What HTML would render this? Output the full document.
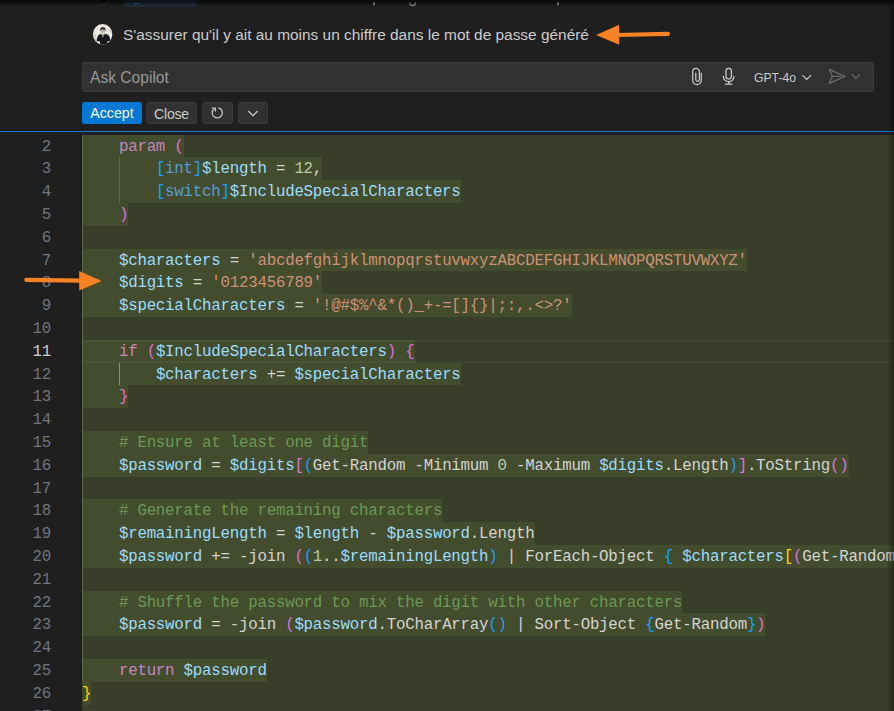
<!DOCTYPE html>
<html><head><meta charset="utf-8">
<style>
html,body{margin:0;padding:0;background:#1f1f1f;}
html{overflow:hidden;width:894px;height:711px;}
body{width:894px;height:711px;overflow:hidden;position:relative;font-family:"Liberation Sans",sans-serif;}
.abs{position:absolute;}
#green{position:absolute;left:82px;top:135px;width:812px;height:576px;background:#393e2b;}
.ln{position:absolute;left:0;width:50.9px;text-align:right;height:22.8px;line-height:22.8px;font-family:"Liberation Mono",monospace;font-size:15.8px;letter-spacing:-0.246px;color:#6e7681;white-space:pre;}
.ln.cur{color:#cccccc;}
.cl{position:absolute;left:82px;height:22.8px;line-height:22.8px;font-family:"Liberation Mono",monospace;font-size:15.8px;letter-spacing:-0.246px;white-space:pre;color:#d4d4d4;}
.hl{position:absolute;left:82px;height:22.8px;background:#434c2c;}
.btn2{top:102px;height:22px;background:#313131;border:1px solid #3b3b3b;border-radius:3px;box-sizing:border-box}
.guide{position:absolute;width:1px;background:#4b4f40;}
</style></head><body>
<!-- top cut-off strip -->
<div class="abs" style="left:97px;top:-14px;width:12px;height:19px;border-radius:50%;background:#0c0c0c;border:1px solid #3a3a3a;box-sizing:border-box"></div>
<div class="abs" style="left:124px;top:-10px;width:73px;height:16.5px;border-radius:4px;background:#232e3a"></div>
<div class="abs" style="left:134px;top:2.5px;width:6px;height:1.5px;background:#2a70b8"></div>
<div class="abs" style="left:373px;top:2px;width:1.5px;height:3px;background:#9a9a9a"></div>
<div class="abs" style="left:409px;top:2px;width:7px;height:3.5px;border-radius:0 0 4px 4px;border:1.3px solid #a8a8a8;border-top:none;box-sizing:border-box"></div>
<div class="abs" style="left:557px;top:2px;width:1.5px;height:3px;background:#9a9a9a"></div>
<div class="abs" style="left:0;top:0;width:894px;height:8px;background:linear-gradient(to bottom,rgba(0,0,0,0.62) 0,rgba(0,0,0,0.55) 2.5px,rgba(0,0,0,0.18) 4.5px,rgba(0,0,0,0) 7px)"></div>

<!-- avatar -->
<svg class="abs" style="left:87px;top:20px" width="30" height="30" viewBox="87 20 30 30">
  <defs>
    <clipPath id="avc"><ellipse cx="102.6" cy="34.2" rx="9.7" ry="10.3"/></clipPath>
    <filter id="avb" x="-20%" y="-20%" width="140%" height="140%"><feGaussianBlur stdDeviation="0.55"/></filter>
  </defs>
  <g filter="url(#avb)">
    <ellipse cx="102.6" cy="34.2" rx="9.7" ry="10.3" fill="#e9eae6"/>
    <g clip-path="url(#avc)">
      <circle cx="95" cy="36" r="1.6" fill="#c9d2bd"/>
      <circle cx="110.5" cy="30.5" r="1.5" fill="#d4d8c8"/>
      <circle cx="96.5" cy="41" r="2" fill="#b9c3a8"/>
      <circle cx="109.5" cy="41.5" r="1.6" fill="#cfc6c0"/>
      <path d="M96.8 41.5 Q96.6 34.4 101.6 34 L105.4 34 Q110.4 34.4 110.3 41.5 L107.6 41.2 L107.2 45 L100.3 45 L99.8 41.2 Z" fill="#15161f"/>
      <ellipse cx="98" cy="42.3" rx="1.5" ry="1" fill="#d9cfc6"/>
      <ellipse cx="109" cy="42.3" rx="1.5" ry="1" fill="#d9cfc6"/>
      <ellipse cx="102.9" cy="31.7" rx="2.45" ry="3.3" fill="#dcc7ba"/>
      <path d="M100.0 31 Q99.9 27 102.9 26.9 Q105.9 27 105.8 31 Q105 29.5 102.9 29.4 Q100.8 29.5 100.0 31 Z" fill="#3a332f"/>
      <path d="M101.1 31.3 H104.7" stroke="#a89488" stroke-width="0.7"/>
      <path d="M101.6 35.4 L102.9 37.6 L104.2 35.4 Z" fill="#c9b3a6"/>
    </g>
  </g>
</svg>
<div class="abs" id="msg" style="left:123px;top:24px;height:22px;line-height:22px;font-size:15.43px;color:#cccccc;white-space:pre;">S'assurer qu'il y ait au moins un chiffre dans le mot de passe généré</div>

<!-- input -->
<div class="abs" style="left:82px;top:62px;width:790px;height:28px;background:#313131;border:1px solid #3c3c3c;border-radius:2.5px"></div>
<div class="abs" id="ask" style="left:90px;top:67px;height:22px;line-height:22px;font-size:15.6px;color:#989898;white-space:pre;">Ask Copilot</div>

<!-- buttons -->
<div class="abs" style="left:82px;top:102px;width:60px;height:22px;background:#0078d4;border-radius:2.5px"></div>
<div class="abs" id="accept" style="left:82px;top:101.8px;width:60px;height:22px;line-height:22px;text-align:center;font-size:14.2px;color:#ffffff;">Accept</div>
<div class="abs btn2" style="left:146px;width:51px"></div>
<div class="abs" id="close" style="left:146px;top:102.5px;width:51px;height:22px;line-height:22px;text-align:center;font-size:14px;letter-spacing:-0.2px;color:#cccccc;">Close</div>
<div class="abs btn2" style="left:202px;width:31px"></div>
<div class="abs btn2" style="left:238px;width:30px"></div>
<svg class="abs" style="left:195px;top:95px" width="80" height="35" viewBox="195 95 80 35" fill="none" stroke="#cccccc" stroke-width="1.25">
  <!-- refresh -->
  <path d="M218.5 107.85 A5.1 5.1 0 1 1 214.0 108.9" />
  <path d="M211.9 108 H215.4 V111.4" stroke-linejoin="miter"/>
  <!-- chevron -->
  <path d="M248.3 111 L253 115.7 L257.7 111"/>
</svg>

<!-- input icons -->
<svg class="abs" style="left:680px;top:60px" width="200" height="35" viewBox="680 60 200 35" fill="none" stroke="#cccccc" stroke-width="1.25" stroke-linecap="round" stroke-linejoin="round">
  <!-- paperclip -->
  <path d="M701.3 73.2 V80.2 A4.3 4.3 0 0 1 692.7 80.2 V71.7 A3.35 3.35 0 0 1 699.4 71.7 V79.6 A1.8 1.8 0 0 1 695.8 79.6 V73.2"/>
  <!-- mic -->
  <rect x="726" y="68.4" width="5.4" height="10.6" rx="2.7"/>
  <path d="M723.3 76.3 A5.35 5.35 0 0 0 734 76.3"/>
  <path d="M728.65 81.8 V84.1 M725.4 84.2 H731.9"/>
  <!-- chevron -->
  <path d="M802.4 75.2 L806.7 79.5 L811 75.2" stroke-width="1.1" stroke-linecap="butt" stroke-linejoin="miter"/>
  <!-- send (disabled) -->
  <g stroke="#6c6c6c" stroke-width="1.2">
    <path d="M829.2 69.4 L844.9 76.4 L829.2 83.4 L832.3 76.4 Z"/>
    <path d="M832.3 76.4 H840.5"/>
    <path d="M851.8 74.4 L855.9 78.5 L860 74.4" stroke-linecap="butt" stroke-linejoin="miter"/>
  </g>
</svg>
<div class="abs" id="gpt" style="left:754px;top:66.7px;height:22px;line-height:22px;font-size:12.2px;color:#cccccc;white-space:pre;">GPT-4o</div>

<!-- blue line -->

<div id="green"></div>
<div class="ln" style="top:135.60px">2</div>
<div class="hl" style="top:135.00px;width:101.60px;height:22.40px"></div>
<div class="cl" style="top:135.60px">    <span style="color:#C586C0">param</span><span style="color:#D4D4D4"> </span><span style="color:#DA70D6">(</span></div>
<div class="ln" style="top:158.40px">3</div>
<div class="hl" style="top:157.40px;width:240.14px;height:22.80px"></div>
<div class="cl" style="top:158.40px">        <span style="color:#179FFF">[</span><span style="color:#569CD6">int</span><span style="color:#179FFF">]</span><span style="color:#9CDCFE">$length</span><span style="color:#D4D4D4"> = </span><span style="color:#B5CEA8">12</span><span style="color:#D4D4D4">,</span></div>
<div class="ln" style="top:181.20px">4</div>
<div class="hl" style="top:180.20px;width:378.68px;height:22.80px"></div>
<div class="cl" style="top:181.20px">        <span style="color:#179FFF">[</span><span style="color:#569CD6">switch</span><span style="color:#179FFF">]</span><span style="color:#9CDCFE">$IncludeSpecialCharacters</span></div>
<div class="ln" style="top:204.00px">5</div>
<div class="hl" style="top:203.00px;width:46.18px;height:22.80px"></div>
<div class="cl" style="top:204.00px">    <span style="color:#DA70D6">)</span></div>
<div class="ln" style="top:226.80px">6</div>
<div class="ln" style="top:249.60px">7</div>
<div class="hl" style="top:248.60px;width:664.99px;height:22.80px"></div>
<div class="cl" style="top:249.60px">    <span style="color:#9CDCFE">$characters</span><span style="color:#D4D4D4"> = </span><span style="color:#CE9178">'abcdefghijklmnopqrstuvwxyzABCDEFGHIJKLMNOPQRSTUVWXYZ'</span></div>
<div class="ln" style="top:272.40px">8</div>
<div class="hl" style="top:271.40px;width:240.14px;height:22.80px"></div>
<div class="cl" style="top:272.40px">    <span style="color:#9CDCFE">$digits</span><span style="color:#D4D4D4"> = </span><span style="color:#CE9178">'0123456789'</span></div>
<div class="ln" style="top:295.20px">9</div>
<div class="hl" style="top:294.20px;width:489.51px;height:22.80px"></div>
<div class="cl" style="top:295.20px">    <span style="color:#9CDCFE">$specialCharacters</span><span style="color:#D4D4D4"> = </span><span style="color:#CE9178">'!@#$%^&amp;*()_+-=[]{}|;:,.&lt;&gt;?'</span></div>
<div class="ln" style="top:318.00px">10</div>
<div class="ln cur" style="top:340.80px">11</div>
<div class="hl" style="top:339.80px;width:332.50px;height:22.80px"></div>
<div class="cl" style="top:340.80px">    <span style="color:#C586C0">if</span><span style="color:#D4D4D4"> </span><span style="color:#DA70D6">(</span><span style="color:#9CDCFE">$IncludeSpecialCharacters</span><span style="color:#DA70D6">)</span><span style="color:#D4D4D4"> </span><span style="color:#DA70D6">{</span></div>
<div class="ln" style="top:363.60px">12</div>
<div class="hl" style="top:362.60px;width:378.68px;height:22.80px"></div>
<div class="cl" style="top:363.60px">        <span style="color:#9CDCFE">$characters</span><span style="color:#D4D4D4"> += </span><span style="color:#9CDCFE">$specialCharacters</span></div>
<div class="ln" style="top:386.40px">13</div>
<div class="hl" style="top:385.40px;width:46.18px;height:22.80px"></div>
<div class="cl" style="top:386.40px">    <span style="color:#DA70D6">}</span></div>
<div class="ln" style="top:409.20px">14</div>
<div class="ln" style="top:432.00px">15</div>
<div class="hl" style="top:431.00px;width:286.32px;height:22.80px"></div>
<div class="cl" style="top:432.00px">    <span style="color:#6A9955"># Ensure at least one digit</span></div>
<div class="ln" style="top:454.80px">16</div>
<div class="hl" style="top:453.80px;width:766.59px;height:22.80px"></div>
<div class="cl" style="top:454.80px">    <span style="color:#9CDCFE">$password</span><span style="color:#D4D4D4"> = </span><span style="color:#9CDCFE">$digits</span><span style="color:#DA70D6">[</span><span style="color:#179FFF">(</span><span style="color:#D4D4D4">Get-Random -Minimum </span><span style="color:#B5CEA8">0</span><span style="color:#D4D4D4"> -Maximum </span><span style="color:#9CDCFE">$digits</span><span style="color:#D4D4D4">.Length</span><span style="color:#179FFF">)</span><span style="color:#DA70D6">]</span><span style="color:#D4D4D4">.ToString</span><span style="color:#DA70D6">()</span></div>
<div class="ln" style="top:477.60px">17</div>
<div class="ln" style="top:500.40px">18</div>
<div class="hl" style="top:499.40px;width:360.20px;height:22.80px"></div>
<div class="cl" style="top:500.40px">    <span style="color:#6A9955"># Generate the remaining characters</span></div>
<div class="ln" style="top:523.20px">19</div>
<div class="hl" style="top:522.20px;width:452.56px;height:22.80px"></div>
<div class="cl" style="top:523.20px">    <span style="color:#9CDCFE">$remainingLength</span><span style="color:#D4D4D4"> = </span><span style="color:#9CDCFE">$length</span><span style="color:#D4D4D4"> - </span><span style="color:#9CDCFE">$password</span><span style="color:#D4D4D4">.Length</span></div>
<div class="ln" style="top:546.00px">20</div>
<div class="hl" style="top:545.00px;width:812.00px;height:22.80px"></div>
<div class="cl" style="top:546.00px">    <span style="color:#9CDCFE">$password</span><span style="color:#D4D4D4"> += -join </span><span style="color:#DA70D6">(</span><span style="color:#179FFF">(</span><span style="color:#B5CEA8">1</span><span style="color:#D4D4D4">..</span><span style="color:#9CDCFE">$remainingLength</span><span style="color:#179FFF">)</span><span style="color:#D4D4D4"> | ForEach-Object </span><span style="color:#179FFF">{</span><span style="color:#D4D4D4"> </span><span style="color:#9CDCFE">$characters</span><span style="color:#FFD700">[</span><span style="color:#DA70D6">(</span><span style="color:#D4D4D4">Get-Random -Maximum $characters.Length</span></div>
<div class="ln" style="top:568.80px">21</div>
<div class="ln" style="top:591.60px">22</div>
<div class="hl" style="top:590.60px;width:600.34px;height:22.80px"></div>
<div class="cl" style="top:591.60px">    <span style="color:#6A9955"># Shuffle the password to mix the digit with other characters</span></div>
<div class="ln" style="top:614.40px">23</div>
<div class="hl" style="top:613.40px;width:683.46px;height:22.80px"></div>
<div class="cl" style="top:614.40px">    <span style="color:#9CDCFE">$password</span><span style="color:#D4D4D4"> = -join </span><span style="color:#DA70D6">(</span><span style="color:#9CDCFE">$password</span><span style="color:#D4D4D4">.ToCharArray</span><span style="color:#179FFF">()</span><span style="color:#D4D4D4"> | Sort-Object </span><span style="color:#179FFF">{</span><span style="color:#D4D4D4">Get-Random</span><span style="color:#179FFF">}</span><span style="color:#DA70D6">)</span></div>
<div class="ln" style="top:637.20px">24</div>
<div class="ln" style="top:660.00px">25</div>
<div class="hl" style="top:659.00px;width:184.72px;height:22.80px"></div>
<div class="cl" style="top:660.00px">    <span style="color:#C586C0">return</span><span style="color:#D4D4D4"> </span><span style="color:#9CDCFE">$password</span></div>
<div class="ln" style="top:682.80px">26</div>
<div class="hl" style="top:681.80px;width:9.24px;height:22.80px"></div>
<div class="cl" style="top:682.80px"><span style="color:#FFD700">}</span></div>
<div class="ln" style="top:705.60px">27</div>
<!-- current line borders -->
<div class="abs" style="left:82px;top:340px;width:812px;height:2px;background:rgba(255,255,255,0.04)"></div>
<div class="abs" style="left:82px;top:361px;width:812px;height:2px;background:rgba(255,255,255,0.04)"></div>
<!-- indent guides -->
<div class="guide" style="left:82px;top:135px;height:547px;background:#5d654a"></div>
<div class="guide" style="left:119px;top:157.4px;height:45.4px;background:#5f664b"></div>
<div class="guide" style="left:119px;top:363px;height:22px;background:#8b9072"></div>


<!-- right shadow -->
<div class="abs" style="left:886px;top:0;width:8px;height:711px;background:linear-gradient(to right,rgba(0,0,0,0),rgba(0,0,0,0.12) 40%,rgba(0,0,0,0.38))"></div>

<div class="abs" style="left:0;top:130.6px;width:893px;height:1.6px;background:#0078d4"></div>
<svg class="abs" style="left:0;top:0" width="894" height="711" viewBox="0 0 894 711">
  <!-- arrows -->
  <g fill="#f98224" stroke="none">
    <polygon points="596,35 619.2,24.8 619.2,44.8"/>
    <polygon points="101.7,281 79.2,271 79.2,290.5"/>
  </g>
  <g stroke="#f98224" stroke-width="4.2" stroke-linecap="round" fill="none">
    <line x1="617" y1="35" x2="668" y2="33.9"/>
    <line x1="26.3" y1="279.9" x2="81" y2="280.6"/>
  </g>
</svg>
</body></html>
